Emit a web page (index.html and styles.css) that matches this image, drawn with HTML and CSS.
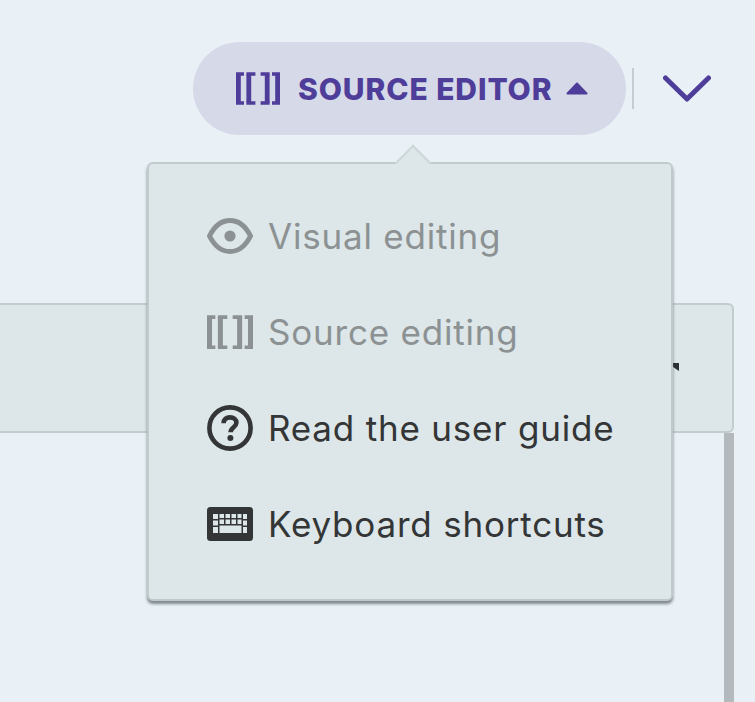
FILE: index.html
```html
<!DOCTYPE html>
<html lang="en">
<head>
<meta charset="utf-8">
<title>Source editor</title>
<link rel="stylesheet" href="styles.css">
</head>
<body>
<div class="page">
  <header class="toolbar">
    <button class="switcher" type="button">
      <svg class="brackets" viewBox="0 0 44 33" aria-hidden="true"><path d="M2.400 2.200V30.800M12.800 2.200V30.800M31.200 2.200V30.800M41.600 2.200V30.800" fill="none" stroke="currentColor" stroke-width="4.800"/><path d="M0 2H8M10.400 2H19.400M24.600 2H33.600M36 2H44M0 31H8M10.400 31H19.400M24.600 31H33.600M36 31H44" fill="none" stroke="currentColor" stroke-width="3.600"/></svg>
      <span class="switcher-label">SOURCE EDITOR</span>
      <svg class="caret" viewBox="0 0 22 13" aria-hidden="true"><path d="M11 1.500 20.500 11.500H1.500Z" fill="currentColor" stroke="currentColor" stroke-width="2" stroke-linejoin="round"/></svg>
    </button>
    <span class="divider"></span>
    <button class="collapse" type="button" aria-label="Collapse">
      <svg viewBox="0 0 48 27" aria-hidden="true"><path d="M2.500 3 24 24 45.500 3" fill="none" stroke="currentColor" stroke-width="5" stroke-linecap="round" stroke-linejoin="round"/></svg>
    </button>
  </header>

  <section class="panel"><span class="panel-caret"></span></section>
  <div class="track"></div>

  <nav class="menu">
    <span class="menu-arrow"></span>
    <a class="item disabled">
      <svg class="icon" viewBox="0 0 46 36" aria-hidden="true"><path d="M2.500 18C8 7 15 2.500 23 2.500S38 7 43.500 18C38 29 31 33.500 23 33.500S8 29 2.500 18Z" fill="none" stroke="currentColor" stroke-width="5" stroke-linejoin="round"/><circle cx="23" cy="18" r="5.600" fill="currentColor"/></svg>
      <span>Visual editing</span>
    </a>
    <a class="item disabled">
      <svg class="icon" viewBox="0 0 44 33" aria-hidden="true"><path d="M2.400 2.200V30.800M12.800 2.200V30.800M31.200 2.200V30.800M41.600 2.200V30.800" fill="none" stroke="currentColor" stroke-width="4.800"/><path d="M0 2H8M10.400 2H19.400M24.600 2H33.600M36 2H44M0 31H8M10.400 31H19.400M24.600 31H33.600M36 31H44" fill="none" stroke="currentColor" stroke-width="3.600"/></svg>
      <span>Source editing</span>
    </a>
    <a class="item">
      <svg class="icon" viewBox="0 0 46 46" aria-hidden="true"><circle cx="23" cy="23" r="20.600" fill="none" stroke="currentColor" stroke-width="4.600"/><path d="M16.600 18.200C16.600 14.400 19.400 12.400 23 12.400S29.400 14.400 29.400 17.800C29.400 22 23.600 22.400 23.600 27.200" fill="none" stroke="currentColor" stroke-width="4.600"/><circle cx="23.400" cy="33" r="3" fill="currentColor"/></svg>
      <span>Read the user guide</span>
    </a>
    <a class="item">
      <svg class="icon" viewBox="0 0 46 34" aria-hidden="true"><rect width="46" height="34" rx="3.500" fill="currentColor"/><path d="M6 7h5v5H6zM12.500 7h4.500v4h-4.500zM18.500 7h4.500v4h-4.500zM24.500 7h4.500v4h-4.500zM30.500 7h4v4h-4zM36 7h4v5h-4zM6 13.500h5v5H6zM12.500 12.500h4.500v4.500h-4.500zM18.500 12.500h4.500v4.500h-4.500zM24.500 12.500h4.500v4.500h-4.500zM30.500 12.500h4v4.500h-4zM36 13.500h4v5h-4zM6 20h5v6H6zM12.500 18.500h22v7.500h-22zM36 20h4v6h-4z" fill="#dde6e8"/></svg>
      <span>Keyboard shortcuts</span>
    </a>
  </nav>
</div>
</body>
</html>
```

FILE: styles.css
```css
* { box-sizing: border-box; }

html, body {
  margin: 0;
  height: 100%;
  overflow: hidden;
  background: #e9f1f7;
}

.page {
  position: relative;
  display: flex;
  flex-direction: column;
  height: 702px;
  font-family: Inter, "Liberation Sans", sans-serif;
}

.toolbar {
  display: flex;
  align-items: center;
  height: 93px;
  margin-top: 42px;
  padding-left: 193px;
}

.switcher {
  display: flex;
  align-items: center;
  width: 433px;
  height: 93px;
  padding: 0 0 0 43px;
  border: 0;
  border-radius: 46.500px;
  background: #d6d9e8;
  color: #4f3d9a;
  font: inherit;
}

.brackets { width: 44px; height: 33px; flex: none; }

.switcher-label {
  margin-left: 18px;
  width: 255px;
  font-size: 30px;
  font-weight: 800;
  letter-spacing: 0.9px;
  white-space: nowrap;
  text-align: left;
}

.caret { width: 22px; height: 13px; margin-left: 13px; flex: none; }

.divider {
  width: 2px;
  height: 41px;
  margin-left: 6px;
  background: #c4cdd0;
}

.collapse {
  display: flex;
  width: 48px;
  height: 27px;
  margin-left: 29px;
  padding: 0;
  border: 0;
  background: none;
  color: #4f3d9a;
}

.collapse svg { width: 48px; height: 27px; }

.panel {
  position: relative;
  flex: none;
  height: 130px;
  margin: 168px 21px 0 -10px;
  background: #dde6e8;
  border: 2px solid #c3cccd;
  border-radius: 6px;
}

.panel-caret {
  position: absolute;
  top: 58px;
  right: 53px;
  width: 0;
  height: 0;
  border-top: 8px solid #2b3033;
  border-left: 12px solid transparent;
}

.track {
  flex: 1;
  width: 10px;
  margin-left: 724px;
  background: #b4b9be;
}

.menu {
  position: absolute;
  top: 162px;
  left: 147px;
  width: 526px;
  height: 439px;
  padding: 24px 0 0 58px;
  background: #dde6e8;
  border: 2px solid #c1cacb;
  border-radius: 6px;
  box-shadow: 0 3px 3px rgba(70, 80, 85, 0.65);
}

.menu-arrow {
  position: absolute;
  top: -14px;
  left: 251px;
  width: 26px;
  height: 26px;
  background: #dde6e8;
  border-top: 2px solid #cdd6d8;
  border-left: 2px solid #cdd6d8;
  transform: rotate(45deg);
}

.item {
  display: flex;
  align-items: center;
  gap: 15px;
  height: 96px;
  color: #333536;
  font-size: 35px;
  letter-spacing: 0.8px;
  line-height: 1;
  white-space: nowrap;
}

.item.disabled { color: #8c9293; }

.icon { width: 46px; height: auto; flex: none; }
```
